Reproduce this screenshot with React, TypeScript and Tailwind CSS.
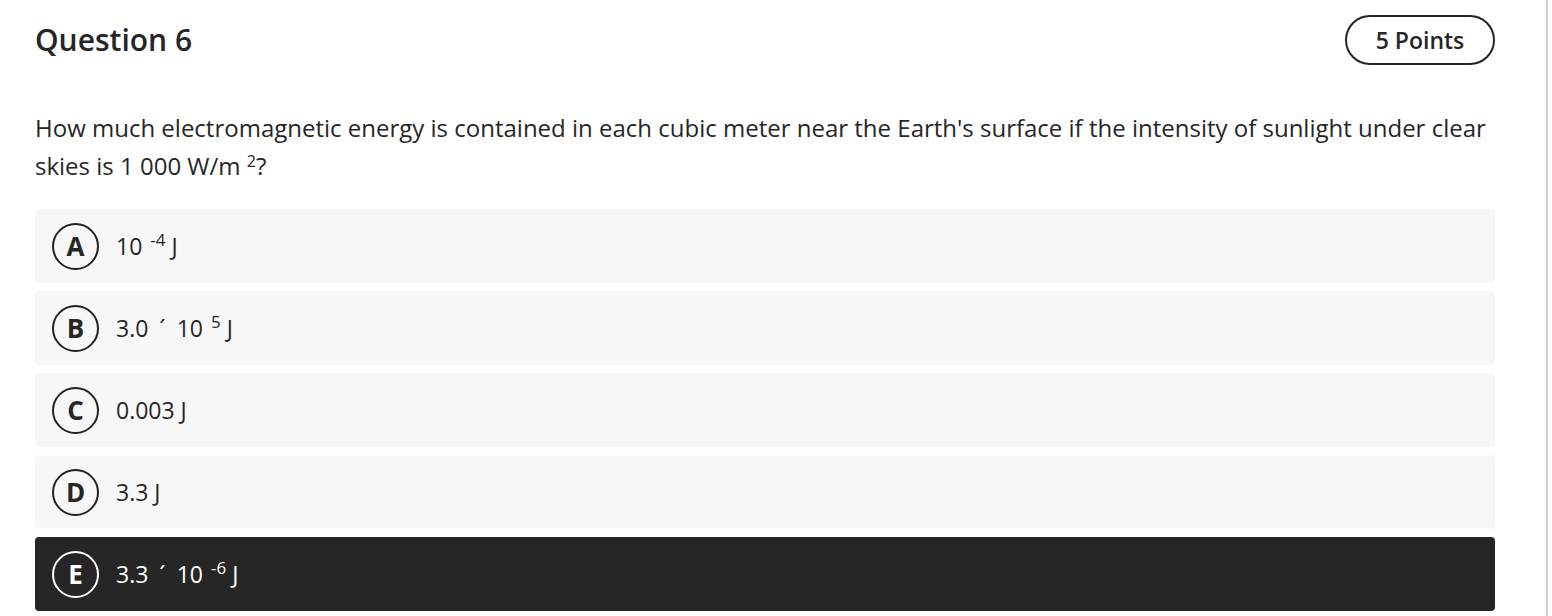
import React from "react";

type Option = {
  letter: string;
  content: React.ReactNode;
};

// superscript that sits near the cap line like the reference
const Sup = ({ children, size = "opt" }: { children: React.ReactNode; size?: "opt" | "q" }) => (
  <span
    className={
      size === "q"
        ? "relative -top-[8px] align-baseline text-[16px] leading-none"
        : "relative -top-[9px] ml-[2px] align-baseline text-[17px] leading-none"
    }
  >
    {children}
  </span>
);

// the "´" used as a times sign, with the wide gaps of the reference
const Times = () => <span className="mx-[5px]">´</span>;

const options: Option[] = [
  {
    letter: "A",
    content: (
      <>
        10 <Sup>-4</Sup> J
      </>
    ),
  },
  {
    letter: "B",
    content: (
      <>
        3.0 <Times /> 10 <Sup>5</Sup> J
      </>
    ),
  },
  { letter: "C", content: <>0.003 J</> },
  { letter: "D", content: <>3.3 J</> },
  {
    letter: "E",
    content: (
      <>
        3.3 <Times /> 10 <Sup>-6</Sup> J
      </>
    ),
  },
];

const selected = "E";

export default function App() {
  return (
    <div className="h-[616px] w-[1552px] overflow-hidden bg-white font-['Open_Sans',sans-serif] text-[#262626]">
      <div className="h-full w-[1548px] border-r-2 border-[#cfcfcf] pl-[35px] pr-[51px]">
        {/* header */}
        <div className="flex h-[80px] items-end justify-between pb-[15px]">
          <h1 className="text-[30px] font-semibold leading-[50px]">Question 6</h1>
          <div className="flex h-[50px] w-[150px] items-center justify-center rounded-full border-2 border-[#222222] text-[23px] font-semibold">
            5 Points
          </div>
        </div>

        {/* question */}
        <p className="mt-[29px] text-[24px] leading-[38px]">
          How much electromagnetic energy is contained in each cubic meter near the Earth's surface if the intensity of
          sunlight under clear skies is 1 000 W/m <Sup size="q">2</Sup>?
        </p>

        {/* options */}
        <div className="mt-[24px] flex flex-col gap-[8px]">
          {options.map((o) => {
            const isSel = o.letter === selected;
            return (
              <div
                key={o.letter}
                className={
                  isSel
                    ? "flex h-[74px] items-center gap-[17px] rounded-[4px] bg-[#262626] pl-[17px] text-white"
                    : "flex h-[74px] items-center gap-[17px] rounded-[4px] bg-[#f7f7f7] pl-[17px] text-[#262626]"
                }
              >
                <span
                  className={
                    isSel
                      ? "flex h-[47px] w-[47px] items-center justify-center rounded-full border-[2.5px] border-white text-[26px] font-bold"
                      : "flex h-[47px] w-[47px] items-center justify-center rounded-full border-[2.5px] border-[#222222] text-[26px] font-bold"
                  }
                >
                  {o.letter}
                </span>
                <span className="text-[23px]">{o.content}</span>
              </div>
            );
          })}
        </div>
      </div>
    </div>
  );
}
